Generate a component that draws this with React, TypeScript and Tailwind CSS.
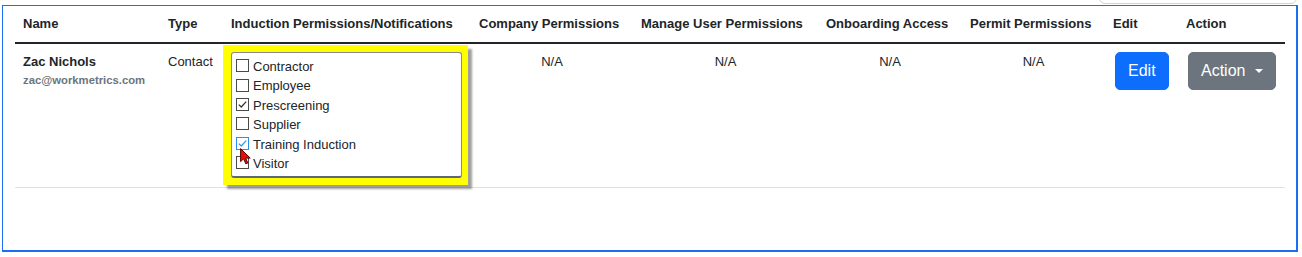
import type { ReactNode } from 'react';

const FONT = { fontFamily: '"Liberation Sans", Arial, sans-serif' };

const COLS = [
  { label: 'Name', w: 'w-[145px]' },
  { label: 'Type', w: 'w-[63px]' },
  { label: 'Induction Permissions/Notifications', w: 'w-[248px]' },
  { label: 'Company Permissions', w: 'w-[162px]' },
  { label: 'Manage User Permissions', w: 'w-[185px]' },
  { label: 'Onboarding Access', w: 'w-[144px]' },
  { label: 'Permit Permissions', w: 'w-[143px]' },
  { label: 'Edit', w: 'w-[73px]' },
  { label: 'Action', w: 'w-[107px]' },
];

const INDUCTIONS = [
  { label: 'Contractor', checked: false },
  { label: 'Employee', checked: false },
  { label: 'Prescreening', checked: true },
  { label: 'Supplier', checked: false },
  { label: 'Training Induction', checked: true, hover: true },
  { label: 'Visitor', checked: false },
];

function Box({ checked, hover }: { checked: boolean; hover?: boolean }) {
  return (
    <span
      className={
        'mb-[2px] grid h-[13px] w-[13px] shrink-0 place-items-center border bg-white ' +
        (hover ? 'border-[#2f8fe8]' : 'border-[#4a4a4a]')
      }
    >
      {checked && (
        <svg viewBox="0 0 11 11" className="h-[11px] w-[11px]" fill="none" stroke={hover ? '#3a9be8' : '#333'} strokeWidth="1.3">
          <path d="M1.8 5.6 L4.3 8 L9.2 2.6" />
        </svg>
      )}
    </span>
  );
}

function Cursor() {
  return (
    <svg viewBox="0 0 12 17" className="absolute left-[17px] top-[103px] h-[17px] w-[12px]">
      <path d="M0.6 0.6 L0.6 13.6 L3.6 10.8 L5.8 15.8 L7.8 15 L5.7 10.1 L10.2 10.1 Z" fill="#e01010" stroke="#5a0000" strokeWidth="1" strokeLinejoin="round" />
    </svg>
  );
}

function Cell({ children, className = '' }: { children?: ReactNode; className?: string }) {
  return <td className={'border-b border-[#dee2e6] px-2 pt-2 align-top ' + className}>{children}</td>;
}

export default function App() {
  return (
    <div className="relative h-[257px] w-[1302px] overflow-hidden bg-white pl-[2px] pt-[5px] text-[#212529]" style={FONT}>
      <div className="absolute left-[1099px] top-[-10px] h-[14px] w-[198px] rounded-md border border-[#cfd3d8] bg-white" />
      <div className="h-[247px] w-[1296px] border-b-2 border-l border-r-2 border-t border-[#1a6ff0] px-[12px] pt-[2px]">
        <table className="w-[1270px] table-fixed text-[13px] leading-[19.5px]">
          <colgroup>
            {COLS.map((c) => (
              <col key={c.label} className={c.w} />
            ))}
          </colgroup>
          <thead>
            <tr>
              {COLS.map((c) => (
                <th
                  key={c.label}
                  className="whitespace-nowrap border-b-2 border-[#212529] px-2 pb-[8.5px] pt-[6px] text-left font-bold"
                >
                  {c.label}
                </th>
              ))}
            </tr>
          </thead>
          <tbody>
            <tr>
              <Cell>
                <div className="font-bold">Zac Nichols</div>
                <div className="text-[11.3px] font-bold leading-[16.5px] text-[#6c757d]">zac@workmetrics.com</div>
              </Cell>
              <Cell>Contact</Cell>
              <td className="border-b border-[#dee2e6] p-0 pb-[2px] pt-px align-top">
                <div className="relative h-[140px] w-[245px] bg-[#ffff00] pb-[7px] pl-[8px] pr-[6px] pt-[7px] shadow-[4px_4px_2px_rgba(0,0,0,0.38)]">
                  <div className="h-[126px] w-[231px] rounded-[3px] border border-b-2 border-[#8a8a8a] border-b-[#5d6775] bg-white pl-[4px] pt-[4px]">
                    {INDUCTIONS.map((i) => (
                      <div key={i.label} className="flex h-[19.4px] items-center gap-[4px]">
                        <Box checked={i.checked} hover={i.hover} />
                        <span>{i.label}</span>
                      </div>
                    ))}
                  </div>
                  <Cursor />
                </div>
              </td>
              <Cell className="text-center">N/A</Cell>
              <Cell className="text-center">N/A</Cell>
              <Cell className="text-center">N/A</Cell>
              <Cell className="text-center">N/A</Cell>
              <Cell>
                <button className="ml-[2px] rounded-[5px] border border-[#0d6efd] bg-[#0d6efd] px-3 py-1.5 text-[16px] leading-6 text-white">
                  Edit
                </button>
              </Cell>
              <Cell>
                <button className="ml-[2px] flex items-center whitespace-nowrap rounded-[5px] border border-[#6c757d] bg-[#6c757d] py-1.5 pl-3 pr-3 text-[16px] leading-6 text-white">
                  Action
                  <span className="ml-[10px] h-0 w-0 border-x-[4px] border-t-[4px] border-x-transparent border-t-white" />
                </button>
              </Cell>
            </tr>
          </tbody>
        </table>
      </div>
    </div>
  );
}
